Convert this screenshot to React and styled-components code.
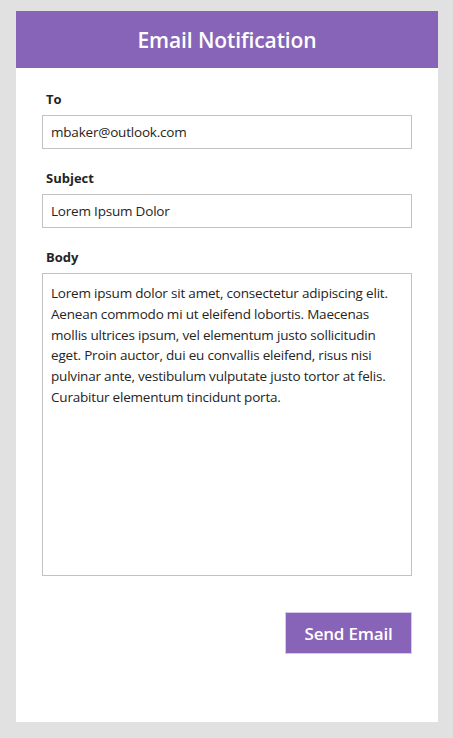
import styled, { createGlobalStyle } from "styled-components";

const Global = createGlobalStyle`
    html, body { margin: 0; padding: 0; background: #e1e1e1; }
    body { font-family: "Open Sans", "Noto Sans", sans-serif; color: #252423; }
`;

const Page = styled.div`
    padding: 11px 15px 16px 16px;
`;

const Card = styled.div`
    background: #fff;
    height: 711px;
    display: flex;
    flex-direction: column;
`;

const Header = styled.div`
    height: 57px;
    background: #8764b8;
    color: #fff;
    display: flex;
    align-items: center;
    justify-content: center;
    font-size: 21px;
    font-weight: 600;
    letter-spacing: -0.1px;
`;

const Form = styled.div`
    padding: 21px 26px 0 26px;
    display: flex;
    flex-direction: column;
`;

const Label = styled.div`
    font-size: 13px;
    font-weight: 700;
    padding-left: 4px;
    height: 22px;
    line-height: 21px;
    margin-bottom: 4px;
`;

const Field = styled.div`
    box-sizing: border-box;
    border: 1px solid #c2c2c2;
    height: ${p => p.$height}px;
    margin-bottom: 19px;
    padding: ${p => (p.$multi ? "9px 8px" : "0 8px")};
    display: flex;
    align-items: ${p => (p.$multi ? "flex-start" : "center")};
    white-space: ${p => (p.$multi ? "pre-line" : "nowrap")};
    font-size: 13.5px;
    line-height: 20.8px;
    color: #252423;
    letter-spacing: -0.2px;
`;

const Actions = styled.div`
    display: flex;
    justify-content: flex-end;
    padding-top: 17px;
`;

const Button = styled.div`
    width: 127px;
    height: 42px;
    box-sizing: border-box;
    border: 1px solid #d7c8ee;
    background: #8764b8;
    color: #fff;
    display: flex;
    align-items: center;
    justify-content: center;
    font-size: 17px;
    font-weight: 600;
    letter-spacing: -0.2px;
`;

const body = [
    "Lorem ipsum dolor sit amet, consectetur adipiscing elit.",
    "Aenean commodo mi ut eleifend lobortis. Maecenas",
    "mollis ultrices ipsum, vel elementum justo sollicitudin",
    "eget. Proin auctor, dui eu convallis eleifend, risus nisi",
    "pulvinar ante, vestibulum vulputate justo tortor at felis.",
    "Curabitur elementum tincidunt porta.",
].join("\n");

export default function App() {
    return (
        <>
            <Global />
            <Page>
                <Card>
                    <Header>Email Notification</Header>
                    <Form>
                        <Label>To</Label>
                        <Field $height={34}>mbaker@outlook.com</Field>
                        <Label>Subject</Label>
                        <Field $height={34}>Lorem Ipsum Dolor</Field>
                        <Label>Body</Label>
                        <Field $height={303} $multi>{body}</Field>
                        <Actions>
                            <Button>Send Email</Button>
                        </Actions>
                    </Form>
                </Card>
            </Page>
        </>
    );
}
